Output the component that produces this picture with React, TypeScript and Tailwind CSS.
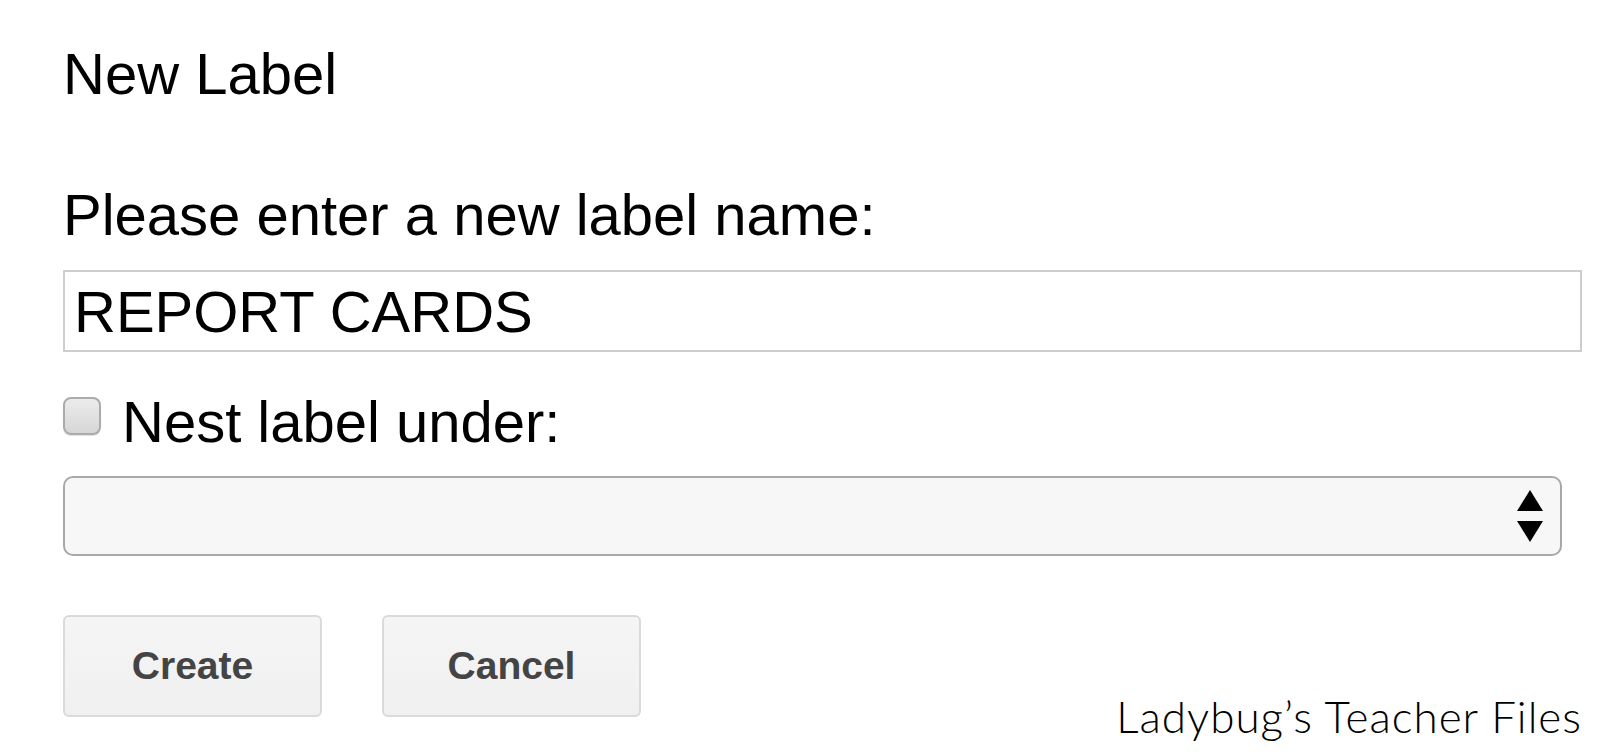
import React from "react";

const sans = { fontFamily: '"Liberation Sans", Arial, sans-serif' };

function UpDownArrows() {
  return (
    <svg width="26" height="52" viewBox="0 0 26 52" className="shrink-0">
      <polygon points="13,0 26,21 0,21" fill="#000" />
      <polygon points="0,31 26,31 13,52" fill="#000" />
    </svg>
  );
}

function DialogButton({ label }: { label: string }) {
  return (
    <button className="flex h-[102px] w-[259px] items-center justify-center rounded-[6px] border-2 border-[#dadada] bg-gradient-to-b from-[#f5f5f5] to-[#f0f0f0] text-[39px] font-bold text-[#444]">
      {label}
    </button>
  );
}

export default function App() {
  return (
    <div className="relative h-[755px] w-[1600px] overflow-hidden bg-white text-black" style={sans}>
      <div className="flex flex-col pl-[63px] pr-[18px] pt-[42px]">
        <h1 className="text-[58px] font-normal leading-[64px]">New Label</h1>

        <p className="mt-[77px] text-[58px] leading-[64px]">Please enter a new label name:</p>

        <div className="mt-[23px] h-[82px] border-2 border-[#cdcdcd] bg-white pl-[9px] pt-[8px] text-[58px] leading-[64px]">
          REPORT CARDS
        </div>

        <div className="mt-[38px] flex items-start gap-[21px]">
          <span className="mt-[7px] block h-[38px] w-[38px] shrink-0 rounded-[8px] border-2 border-[#ababab] bg-gradient-to-b from-[#ececec] to-[#d6d6d6] shadow-[0_1px_1px_rgba(0,0,0,0.12)]" />
          <span className="text-[58px] leading-[64px]">Nest label under:</span>
        </div>

        <div className="mt-[22px] flex h-[80px] w-[1499px] items-center justify-end rounded-[10px] border-2 border-[#a8a8a8] bg-[#f7f7f7] pr-[17px]">
          <UpDownArrows />
        </div>

        <div className="mt-[59px] flex gap-[60px]">
          <DialogButton label="Create" />
          <DialogButton label="Cancel" />
        </div>
      </div>

      <div
        className="absolute right-[18px] top-[688px] text-[44px] font-light leading-[56px] tracking-[1px] text-black"
        style={{ fontFamily: 'Lato, "Noto Sans", sans-serif' }}
      >
        Ladybug’s Teacher Files
      </div>
    </div>
  );
}
